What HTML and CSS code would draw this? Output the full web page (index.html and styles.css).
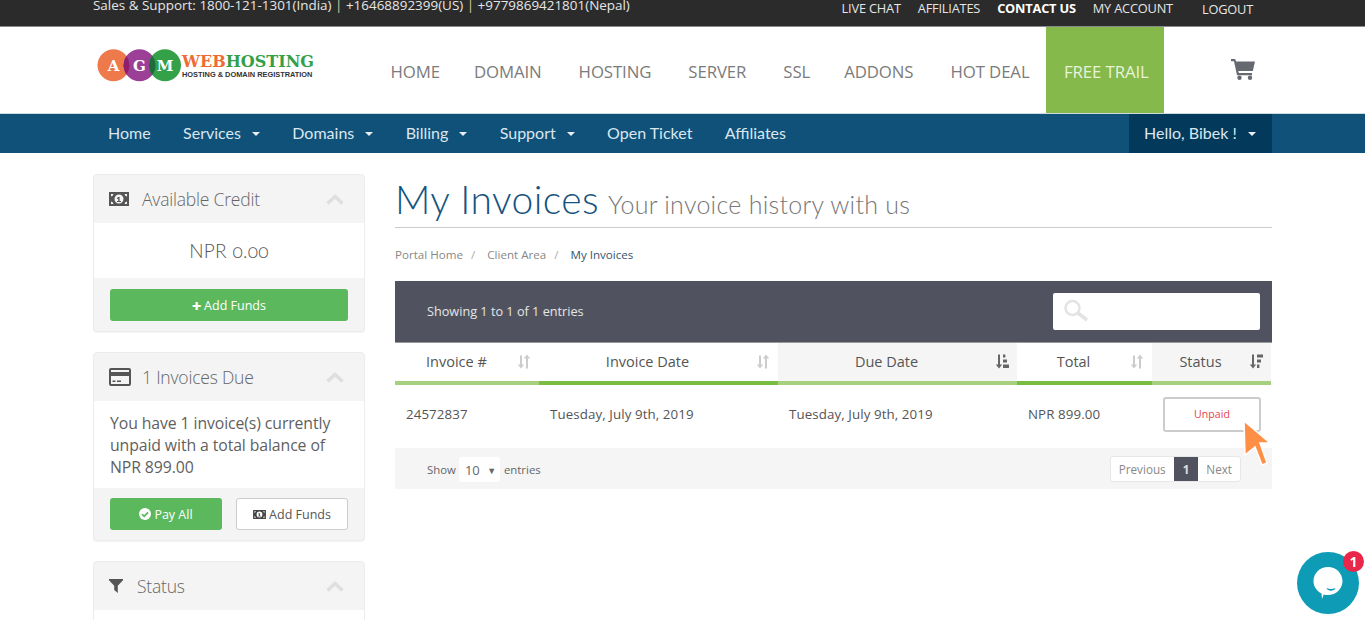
FILE: index.html
```html
<!DOCTYPE html>
<html lang="en">
<head>
<meta charset="utf-8">
<title>My Invoices</title>
<link rel="stylesheet" href="styles.css">
</head>
<body>
<svg class="defs" width="0" height="0">
  <symbol id="i-money" viewBox="0 0 20 14"><path fill-rule="evenodd" d="M0 0h20v14H0zM2 2v2.4A2.6 2.6 0 0 0 4.4 2zM15.6 2A2.6 2.6 0 0 0 18 4.400V2zM2 9.600V12h2.400A2.600 2.600 0 0 0 2 9.600zM18 9.600A2.600 2.600 0 0 0 15.600 12H18zM10 2.500a4.500 4.500 0 1 0 0 9 4.500 4.500 0 0 0 0-9zM9 5h1.600v4H12v1H8V9h1.200V6.300L8.300 7l-.6-.8z"/></symbol>
  <symbol id="i-card" viewBox="0 0 22 18"><path fill-rule="evenodd" d="M2 0h18a2 2 0 0 1 2 2v14a2 2 0 0 1-2 2H2a2 2 0 0 1-2-2V2a2 2 0 0 1 2-2zM2 2v2h18V2zM2 8v8h18V8zM3.500 12.500h3v1.500h-3zM8 12.500h4v1.500H8z"/></symbol>
  <symbol id="i-filter" viewBox="0 0 14 14"><path d="M0 0h14v1.200L8.800 6.800V14L5.200 11V6.800L0 1.200z"/></symbol>
  <symbol id="i-chev" viewBox="0 0 18 11"><path fill="none" stroke="currentColor" stroke-width="3.600" d="M1.500 9.500 9 2.500l7.500 7"/></symbol>
  <symbol id="i-sort" viewBox="0 0 14 14"><path d="M3 1h2v9h2.200L4 14 .8 10H3zM10 0l3.200 4H11v10H9V4H6.800z"/></symbol>
  <symbol id="i-sort-a" viewBox="0 0 14 14"><path d="M3 0h2v10h2.200L4 14 .8 10H3zM8 0h2.400v3H8zM8 5h4v3H8zM8 10h6v3.500H8z"/></symbol>
  <symbol id="i-sort-d" viewBox="0 0 14 14"><path d="M3 0h2v10h2.200L4 14 .8 10H3zM8 0h6v3H8zM8 5h4v3H8zM8 10h2.400v3.500H8z"/></symbol>
</svg>

<div class="topbar">
  <div class="wrap topbar-in">
    <div class="support">Sales &amp; Support: 1800-121-1301(India) <span class="sep">|</span> +16468892399(US) <span class="sep">|</span> +9779869421801(Nepal)</div>
    <div class="toplinks">
      <a>LIVE CHAT</a><a>AFFILIATES</a><a class="strong">CONTACT US</a><a>MY ACCOUNT</a><a class="logout">LOGOUT</a>
    </div>
  </div>
</div>

<header class="head">
  <div class="wrap head-in">
    <div class="logo">
      <svg width="224" height="40" viewBox="0 0 224 40">
        <circle cx="20.500" cy="20.300" r="16" fill="#ee7a4c"/>
        <circle cx="46.500" cy="20.300" r="16" fill="#9c3f97"/>
        <circle cx="72" cy="20.300" r="16" fill="#34a048"/>
        <path d="M33.500 11a16 16 0 0 1 0 18.660 16 16 0 0 1 0-18.660z" fill="#8f1f6b"/>
        <path d="M59.250 10.640a16 16 0 0 1 0 19.320 16 16 0 0 1 0-19.320z" fill="#1f6b3a"/>
        <text x="20.500" y="26" class="lg-l">A</text>
        <text x="46.500" y="26" class="lg-l">G</text>
        <text x="72" y="26" class="lg-l">M</text>
        <text x="89" y="21.500" class="lg-w">WEB<tspan class="lg-h">HOSTING</tspan></text>
        <text x="89" y="32" class="lg-s">HOSTING &amp; DOMAIN REGISTRATION</text>
      </svg>
    </div>
    <nav class="mainnav">
      <a class="tight">HOME</a><a>DOMAIN</a><a>HOSTING</a><a>SERVER</a><a class="tight">SSL</a><a>ADDONS</a><a>HOT DEAL</a><a class="free">FREE TRAIL</a>
    </nav>
    <svg class="cart" width="24" height="21" viewBox="0 0 24 21"><path fill="#666a70" d="M0 0h4.200l.8 2.500h19l-2.200 9.500H7.300l.5 2H21v2.200H6L3 2.200H0z"/><circle cx="8.500" cy="18.700" r="2.200" fill="#666a70"/><circle cx="19" cy="18.700" r="2.200" fill="#666a70"/></svg>
  </div>
</header>

<div class="subnav">
  <div class="wrap subnav-in">
    <div class="subitems">
      <a>Home</a><a>Services<i class="caret"></i></a><a>Domains<i class="caret"></i></a><a>Billing<i class="caret"></i></a><a>Support<i class="caret"></i></a><a>Open Ticket</a><a>Affiliates</a>
    </div>
    <a class="hello">Hello, Bibek !<i class="caret"></i></a>
  </div>
</div>

<div class="wrap page">
  <aside class="side">
    <section class="panel">
      <div class="p-head"><svg class="p-ic ic-money"><use href="#i-money"/></svg><span>Available Credit</span><svg class="chev"><use href="#i-chev"/></svg></div>
      <div class="p-body credit">NPR 0.00</div>
      <div class="p-foot"><a class="btn green full"><span class="plus">✚</span> Add Funds</a></div>
    </section>
    <section class="panel">
      <div class="p-head"><svg class="p-ic ic-card"><use href="#i-card"/></svg><span>1 Invoices Due</span><svg class="chev"><use href="#i-chev"/></svg></div>
      <div class="p-body due">You have 1 invoice(s) currently unpaid with a total balance of NPR 899.00</div>
      <div class="p-foot two">
        <a class="btn green"><svg class="chk" width="12" height="12" viewBox="0 0 12 12"><circle cx="6" cy="6" r="6" fill="#fff"/><path d="M3 6.200 5.200 8.300 9 4.300" fill="none" stroke="#5cb85c" stroke-width="1.800"/></svg>Pay All</a>
        <a class="btn white"><svg class="mini"><use href="#i-money"/></svg>Add Funds</a>
      </div>
    </section>
    <section class="panel">
      <div class="p-head"><svg class="p-ic ic-filter"><use href="#i-filter"/></svg><span>Status</span><svg class="chev"><use href="#i-chev"/></svg></div>
      <div class="p-body stub"></div>
    </section>
  </aside>

  <main class="main">
    <div class="title"><h1>My Invoices</h1> <small>Your invoice history with us</small></div>
    <ol class="crumbs"><li>Portal Home</li><li class="s">/</li><li>Client Area</li><li class="s">/</li><li class="cur">My Invoices</li></ol>

    <div class="tbar">
      <span class="count">Showing 1 to 1 of 1 entries</span>
      <div class="search"><svg width="26" height="24" viewBox="0 0 26 24"><circle cx="9.500" cy="9" r="7" fill="none" stroke="#e3e3e3" stroke-width="2.500"/><path d="m15 14 9 7" stroke="#e3e3e3" stroke-width="3.500"/></svg></div>
    </div>

    <div class="tablewrap">
      <div class="thead">
        <div class="th c1 sh"><span>Invoice #</span><svg class="so"><use href="#i-sort"/></svg></div>
        <div class="th c2"><span>Invoice Date</span><svg class="so"><use href="#i-sort"/></svg></div>
        <div class="th c3 sh"><span>Due Date</span><svg class="so dk"><use href="#i-sort-a"/></svg></div>
        <div class="th c4"><span>Total</span><svg class="so"><use href="#i-sort"/></svg></div>
        <div class="th c5 sh"><span>Status</span><svg class="so dk"><use href="#i-sort-d"/></svg></div>
      </div>
      <div class="trow">
        <div class="td c1">24572837</div>
        <div class="td c2">Tuesday, July 9th, 2019</div>
        <div class="td c3">Tuesday, July 9th, 2019</div>
        <div class="td c4">NPR 899.00</div>
        <div class="td c5"><a class="unpaid">Unpaid</a></div>
      </div>
      <svg class="pointer" width="30" height="50" viewBox="0 0 30 50"><path d="M2 3 28 25 18 25 25 45 20 47 13 29 3 37z" fill="#ff8f45" stroke="#fff" stroke-width="1.500"/></svg>
    </div>

    <div class="tfoot">
      <div class="len">Show <span class="sel">10 <b>▼</b></span> entries</div>
      <div class="pager"><a>Previous</a><a class="on">1</a><a>Next</a></div>
    </div>
  </main>
</div>

<div class="chat">
  <svg width="30" height="32" viewBox="0 0 30 32"><path fill="#fff" d="M15 0c8 0 14.500 6.200 14.500 14S23 28 15 28c-1.500 0-3-.2-4.300-.6L9 32l-.5-5.600C3.500 24 .5 19.500.5 14 .5 6.200 7 0 15 0z"/><path fill="#0d9bb5" d="M13.500 21c2.700 1.300 6.300 1.300 9 0-1 3.500-8 3.500-9 0z"/></svg>
  <span class="badge">1</span>
</div>
</body>
</html>
```
FILE: styles.css
```css
* { box-sizing: border-box; }
html, body { margin: 0; padding: 0; height: 100%; overflow: hidden; }
body { font-family: "Open Sans", sans-serif; color: #555; background: #fff; font-size: 14px; }
a { color: inherit; text-decoration: none; }
.defs { position: absolute; }
.wrap { width: 1179px; margin-left: 93px; }

.topbar { height: 27px; background: #2b2b2b; border-bottom: 1px solid #8a8a8a; color: #e6e6e6; overflow: hidden; }
.topbar-in { display: flex; justify-content: space-between; }
.support { margin-top: -5px; line-height: 20px; font-size: 13.450px; white-space: nowrap; }
.sep { color: #d9c9a0; }
.toplinks { display: flex; font-size: 12.800px; line-height: 17px; letter-spacing: -.2px; padding-right: 19px; }
.toplinks a { margin-left: 17px; }
.toplinks .strong { font-weight: 700; color: #fff; }
.toplinks .logout { margin-left: 29px; padding-top: 1px; }

.head { height: 86px; background: #fff; }
.head-in { display: flex; height: 100%; }
.logo { width: 279px; padding-top: 18px; flex: none; }
.lg-l { font: 700 15px "DejaVu Serif", serif; fill: #fff; text-anchor: middle; }
.lg-w { font: 700 16px "DejaVu Serif", serif; fill: #ee6b35; }
.lg-h { fill: #34a048; }
.lg-s { font: 700 7.400px "Liberation Sans", sans-serif; fill: #333; }
.mainnav { display: flex; font-size: 16.800px; color: #7b7b7b; }
.mainnav a { display: flex; align-items: center; padding: 3px 18.500px 0; letter-spacing: -.1px; }
.mainnav .tight { margin-right: -3px; }
.mainnav .free { background: #86b94b; color: #e8f3dc; padding: 3px 15px 0 18px; margin-left: -2px; }
.cart { margin: 32px 0 0 67px; }

.subnav { height: 40px; background: #0f5179; border-top: 1px solid #cfd9e0; color: #dbe6ee; font-family: "Lato", sans-serif; font-size: 16px; }
.subnav-in { display: flex; justify-content: space-between; height: 100%; }
.subitems { display: flex; gap: 2.400px; }
.subitems a { display: flex; align-items: center; padding: 0 15px 2px; }
.caret { display: inline-block; width: 0; height: 0; margin-left: 11px; margin-top: 2px; border: 4px solid transparent; border-top-color: #e8eef3; border-bottom: 0; }
.hello { display: flex; align-items: center; background: #033a5c; width: 143px; padding: 0 0 2px 15px; }

.page { display: flex; padding-top: 21px; }
.side { width: 272px; flex: none; margin-right: 30px; display: flex; flex-direction: column; gap: 20px; }
.panel { border: 1px solid #ececec; border-radius: 4px; background: #f4f4f4; box-shadow: 0 1px 1px rgba(0,0,0,.05); }
.p-head { height: 48px; display: flex; align-items: center; padding: 0 20px 0 15px; font-size: 17.500px; font-weight: 300; color: #666; }
.p-head span { flex: 1; letter-spacing: -.2px; }
.p-ic { fill: #555; flex: none; margin-right: 13px; }
.ic-money { width: 20px; height: 14px; }
.ic-card { width: 22px; height: 18px; margin-right: 11px; }
.ic-filter { width: 14px; height: 14px; margin-right: 14px; }
.chev { width: 18px; height: 11px; color: #dfdfdf; flex: none; }
.p-body { background: #fff; }
.credit { height: 55px; display: flex; align-items: center; justify-content: center; font-size: 19px; font-weight: 300; color: #555; font-family: "Lato", sans-serif; letter-spacing: .3px; font-variant-numeric: oldstyle-nums; }
.due { height: 87px; padding: 11px 16px; font-size: 15.800px; line-height: 22px; color: #5f5f5f; letter-spacing: -.1px; }
.stub { height: 60px; }
.p-foot { padding: 11px 16px 10px; }
.two { display: flex; justify-content: space-between; padding-top: 10px; }
.btn { display: flex; align-items: center; justify-content: center; height: 32px; width: 112px; border-radius: 3px; font-size: 12.500px; }
.full { width: 238px; }
.green { background: #5cb85c; color: #fff; }
.white { background: #fff; border: 1px solid #ccc; color: #555; }
.plus { font-size: 11px; margin-right: 3px; }
.chk { margin-right: 3px; }
.mini { width: 13px; height: 9px; fill: #444; margin-right: 3px; }

.main { flex: 1; min-width: 0; }
.title { height: 54px; border-bottom: 1px solid #ccc; white-space: nowrap; display: flex; align-items: baseline; }
.title h1 { margin: 0; font-family: "Lato", sans-serif; font-weight: 300; font-size: 39px; line-height: 50px; color: #15537f; letter-spacing: .4px; }
.title small { margin-left: 9px; font-family: "Lato", sans-serif; font-weight: 300; font-size: 25px; color: #777; letter-spacing: .27px; }
.crumbs { list-style: none; margin: 0; padding: 19px 0 0; height: 53px; display: flex; font-size: 11.600px; color: #888; line-height: 16px; }
.crumbs .s { margin: 0 12px 0 8px; color: #aaa; }
.crumbs .cur { color: #33566f; }

.tbar { height: 62px; background: #50535f; display: flex; align-items: center; justify-content: space-between; padding: 0 12px 0 32px; color: #e6e6e6; font-size: 12.700px; border-bottom: 1px solid #999; }
.count { margin-top: -2px; }
.search { width: 207px; height: 37px; background: #fff; border-radius: 2px; padding: 6px 0 0 10px; }

.tablewrap { position: relative; }
.thead { display: flex; height: 42px; }
.th { height: 100%; display: flex; align-items: center; justify-content: center; position: relative; border-bottom: 4px solid #79bd41; color: #555; font-size: 14.500px; padding: 0 22px 2px 0; }
.th.sh { background: #f5f5f5; border-bottom-color: #a5d17e; }
.c1.th { background: #fff; justify-content: flex-start; padding-left: 31px; }
.c1 { width: 144px; }
.c2, .c3 { width: 239px; }
.c4 { width: 135px; }
.c5 { width: 119px; }
.so { position: absolute; right: 8px; top: 11px; width: 14px; height: 15px; fill: #ccc; }
.so.dk { fill: #666; }
.trow { display: flex; height: 63px; align-items: center; font-size: 13.300px; color: #555; padding-bottom: 5px; }
.td { padding-left: 11px; letter-spacing: .1px; }
.unpaid { display: flex; align-items: center; justify-content: center; width: 98px; height: 35px; border: 2px solid #ccc; border-radius: 3px; color: #e8414f; font-size: 10.500px; }
.pointer { position: absolute; left: 847px; top: 75px; }

.tfoot { height: 41px; background: #f5f5f5; display: flex; align-items: center; justify-content: space-between; padding: 1px 31px 0 32px; font-size: 11.400px; color: #666; }
.len { display: flex; align-items: center; }
.sel { display: inline-block; background: #fff; width: 41px; height: 25px; margin: 0 4px 0 3px; border-radius: 3px; padding: 4px 0 0 6px; font-size: 13px; line-height: 18px; }
.sel b { font-size: 9px; margin-left: 4px; font-weight: 400; position: relative; top: -1px; }
.pager { display: flex; background: #fff; border: 1px solid #e7e7e7; border-radius: 3px; height: 26px; font-size: 11.700px; }
.pager a { display: flex; align-items: center; padding: 0 8px; color: #888; }
.pager .on { background: #50535f; color: #ddd; font-weight: 700; padding: 0 9px; }

.chat { position: fixed; left: 1297px; top: 552px; width: 62px; height: 62px; border-radius: 50%; background: #0d9bb5; display: flex; align-items: center; justify-content: center; }
.badge { position: absolute; right: -5px; top: -1px; width: 21px; height: 21px; border-radius: 50%; background: #e8274b; color: #fff; font-weight: 700; font-size: 14px; line-height: 21px; text-align: center; }
```
